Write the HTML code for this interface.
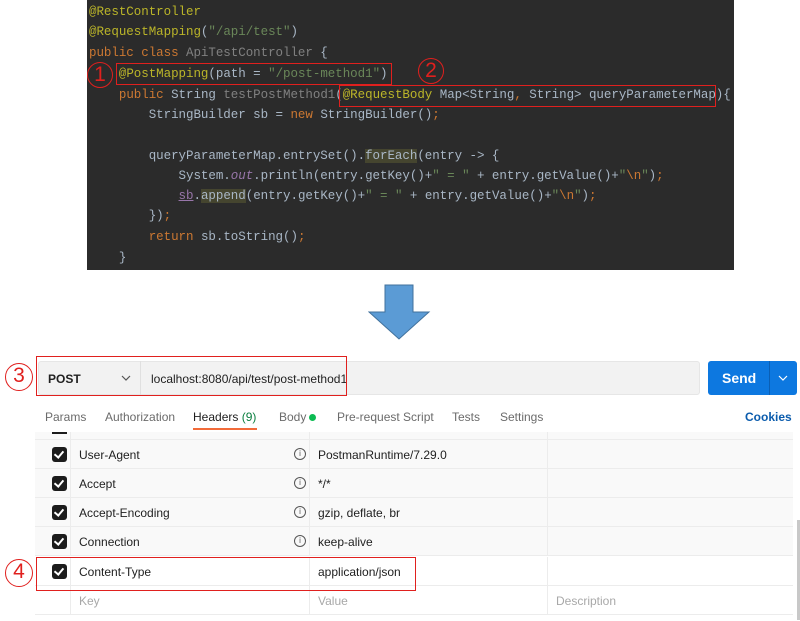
<!DOCTYPE html>
<html><head><style>
*{margin:0;padding:0;box-sizing:border-box}
body{width:800px;height:621px;background:#fff;position:relative;overflow:hidden;font-family:"Liberation Sans",sans-serif}
.code{position:absolute;left:87px;top:0;width:647px;height:270px;background:#2b2b2b}
.ln{position:absolute;left:2px;font-family:"Liberation Mono",monospace;font-size:12.5px;color:#a9b7c6;white-space:pre;line-height:20px;letter-spacing:-0.04px}
.a{color:#bbb529}.k{color:#cc7832}.s{color:#6a8759}.g{color:#808080}.o{color:#9876aa;font-style:italic}.h{background:#45452f}
.rb{position:absolute;border:1.5px solid #e0201e}
.circ{position:absolute;width:26px;height:26px;border:1.5px solid #e0201e;border-radius:50%;color:#e0201e;font-size:21px;text-align:center;line-height:24px;background:transparent}
.abs{position:absolute}
.tab{position:absolute;top:410px;font-size:12px;color:#6b6b6b}
.row{position:absolute;left:35px;width:758px;height:29px;border-bottom:1px solid #ececec;background:#f9f9f9;font-size:12px;color:#212121}
.row .c1{position:absolute;left:35px;top:0;height:29px;border-left:1px solid #ececec}
.row .c2{position:absolute;left:274px;top:0;height:29px;border-left:1px solid #ececec}
.row .c3{position:absolute;left:512px;top:0;height:29px;border-left:1px solid #ececec}
.cb{position:absolute;left:17px;top:7px;width:15px;height:15px;background:#1c1c1c;border-radius:3px}
.cb:after{content:"";position:absolute;left:4px;top:2px;width:4px;height:7px;border:solid #fff;border-width:0 2px 2px 0;transform:rotate(40deg)}
.k1{position:absolute;left:44px;top:8px}
.v1{position:absolute;left:283px;top:8px}
.inf{position:absolute;left:259px;top:8px;width:12px;height:12px;border:1px solid #555;border-radius:50%;font-size:8px;text-align:center;line-height:10px;color:#555}
</style></head><body>
<div class="code">
<div class="ln" style="top:2px"><span class="a">@RestController</span></div>
<div class="ln" style="top:22px"><span class="a">@RequestMapping</span>(<span class="s">"/api/test"</span>)</div>
<div class="ln" style="top:43px"><span class="k">public class </span><span class="g">ApiTestController</span> {</div>
<div class="ln" style="top:64px">    <span class="a">@PostMapping</span>(path = <span class="s">"/post-method1"</span>)</div>
<div class="ln" style="top:85px">    <span class="k">public </span>String <span class="g">testPostMethod1</span>(<span class="a">@RequestBody</span> Map&lt;String<span class="k">, </span>String&gt; queryParameterMap){</div>
<div class="ln" style="top:105px">        StringBuilder sb = <span class="k">new </span>StringBuilder()<span class="k">;</span></div>
<div class="ln" style="top:146px">        queryParameterMap.entrySet().<span class="h">forEach</span>(entry -&gt; {</div>
<div class="ln" style="top:166px">            System.<span class="o">out</span>.println(entry.getKey()+<span class="s">" = "</span> + entry.getValue()+<span class="s">"</span><span class="k">\n</span><span class="s">"</span>)<span class="k">;</span></div>
<div class="ln" style="top:186px">            <span style="color:#9876aa;text-decoration:underline">sb</span>.<span class="h">append</span>(entry.getKey()+<span class="s">" = "</span> + entry.getValue()+<span class="s">"</span><span class="k">\n</span><span class="s">"</span>)<span class="k">;</span></div>
<div class="ln" style="top:206px">        })<span class="k">;</span></div>
<div class="ln" style="top:227px">        <span class="k">return </span>sb.toString()<span class="k">;</span></div>
<div class="ln" style="top:248px">    }</div>
</div>
<div class="rb" style="left:116px;top:63px;width:276px;height:22px"></div>
<div class="rb" style="left:339px;top:85px;width:377px;height:22px"></div>
<div class="circ" style="left:87px;top:62px">1</div>
<div class="circ" style="left:418px;top:58px">2</div>

<svg class="abs" style="left:368px;top:283px" width="64" height="60"><path d="M17 2H45V29H61L31 56L1 29H17Z" fill="#5b9bd5" stroke="#41719c" stroke-width="1"/></svg>

<div class="abs" style="left:38px;top:361px;width:662px;height:34px;background:#f2f2f2;border:1px solid #e6e6e6;border-radius:3px"></div>
<div class="abs" style="left:140px;top:361px;height:34px;border-left:1px solid #e0e0e0"></div>
<div class="abs" style="left:48px;top:372px;font-size:12px;font-weight:bold;color:#212121">POST</div>
<svg class="abs" style="left:121px;top:375px" width="10" height="6"><path d="M1 1L5 5L9 1" fill="none" stroke="#555" stroke-width="1.2"/></svg>
<div class="abs" style="left:151px;top:372px;font-size:12px;color:#212121">localhost:8080/api/test/post-method1</div>
<div class="abs" style="left:708px;top:361px;width:89px;height:34px;background:#0d78e0;border-radius:3px"></div>
<div class="abs" style="left:769px;top:361px;height:34px;border-left:1px solid #0a5fb5"></div>
<div class="abs" style="left:722px;top:370px;font-size:14px;font-weight:bold;color:#fff">Send</div>
<svg class="abs" style="left:778px;top:375px" width="10" height="6"><path d="M1 1L5 5L9 1" fill="none" stroke="#fff" stroke-width="1.2"/></svg>
<div class="rb" style="left:36px;top:356px;width:311px;height:40px"></div>
<div class="circ" style="left:5px;top:363px;width:28px;height:28px">3</div>

<div class="tab" style="left:45px">Params</div>
<div class="tab" style="left:105px">Authorization</div>
<div class="tab" style="left:193px;color:#212121">Headers <span style="color:#0a7f3f">(9)</span></div>
<div class="abs" style="left:193px;top:428px;width:64px;height:2px;background:#f26b3a"></div>
<div class="tab" style="left:279px">Body</div>
<div class="abs" style="left:309px;top:414px;width:7px;height:7px;border-radius:50%;background:#0cbb52"></div>
<div class="tab" style="left:337px">Pre-request Script</div>
<div class="tab" style="left:452px">Tests</div>
<div class="tab" style="left:500px">Settings</div>
<div class="tab" style="left:745px;color:#0b5cad;font-weight:bold">Cookies</div>

<div class="row" style="top:432px;height:8px"><div class="c1" style="height:8px"></div><div class="c2" style="height:8px"></div><div class="c3" style="height:8px"></div><div class="abs" style="left:17px;top:0;width:15px;height:2px;background:#1c1c1c"></div></div>
<div class="row" style="top:440px"><div class="c1"></div><div class="c2"></div><div class="c3"></div><div class="cb"></div><div class="k1">User-Agent</div><div class="inf">i</div><div class="v1">PostmanRuntime/7.29.0</div></div>
<div class="row" style="top:469px"><div class="c1"></div><div class="c2"></div><div class="c3"></div><div class="cb"></div><div class="k1">Accept</div><div class="inf">i</div><div class="v1">*/*</div></div>
<div class="row" style="top:498px"><div class="c1"></div><div class="c2"></div><div class="c3"></div><div class="cb"></div><div class="k1">Accept-Encoding</div><div class="inf">i</div><div class="v1">gzip, deflate, br</div></div>
<div class="row" style="top:527px"><div class="c1"></div><div class="c2"></div><div class="c3"></div><div class="cb"></div><div class="k1">Connection</div><div class="inf">i</div><div class="v1">keep-alive</div></div>
<div class="row" style="top:557px;background:#fff"><div class="c1"></div><div class="c2"></div><div class="c3"></div><div class="cb"></div><div class="k1">Content-Type</div><div class="v1">application/json</div></div>
<div class="row" style="top:586px;background:#fff;color:#a8a8a8"><div class="c1"></div><div class="c2"></div><div class="c3"></div><div class="k1">Key</div><div class="v1">Value</div><div class="abs" style="left:521px;top:8px">Description</div></div>
<div class="abs" style="left:797px;top:520px;width:3px;height:100px;background:#c8c8c8"></div>
<div class="rb" style="left:36px;top:557px;width:380px;height:34px"></div>
<div class="circ" style="left:5px;top:559px;width:28px;height:28px">4</div>
</body></html>
